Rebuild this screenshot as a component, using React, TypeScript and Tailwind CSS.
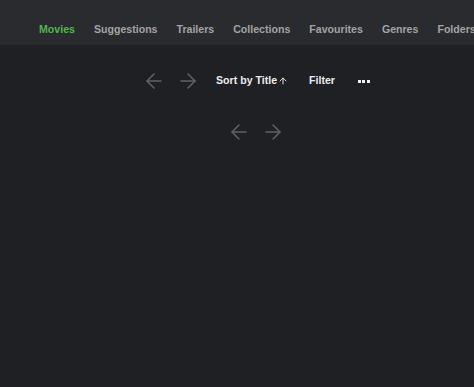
import React from "react";
import { ArrowLeft, ArrowRight, ArrowUp } from "lucide-react";

const tabs = ["Movies", "Suggestions", "Trailers", "Collections", "Favourites", "Genres", "Folders"];

function Dots() {
  return (
    <span className="flex items-center gap-[1.5px]">
      <span className="w-[3px] h-[3px] bg-[#f0f0f0]" />
      <span className="w-[3px] h-[3px] bg-[#f0f0f0]" />
      <span className="w-[3px] h-[3px] bg-[#f0f0f0]" />
    </span>
  );
}

function Pager() {
  return (
    <div className="flex items-center">
      <ArrowLeft size={24} strokeWidth={1.5} className="text-[#616266]" />
      <ArrowRight size={24} strokeWidth={1.5} className="text-[#616266] ml-[10px]" />
    </div>
  );
}

export default function App() {
  return (
    <div
      className="w-[474px] h-[387px] overflow-hidden bg-[#1f2023] text-[#e8e8e8]"
      style={{ fontFamily: '"Liberation Sans", Arial, sans-serif' }}
    >
      {/* Tabs */}
      <div className="h-[45px] bg-[#2a2b2f] flex items-end pb-[10px] pl-[39px] gap-x-[19px] whitespace-nowrap">
        {tabs.map((tab, i) => (
          <span
            key={tab}
            className={`text-[10.6px] font-bold leading-[12px] ${
              i === 0 ? "text-[#52b54b]" : "text-[#a3a3a3]"
            }`}
          >
            {tab}
          </span>
        ))}
      </div>

      {/* Toolbar */}
      <div className="flex justify-center pl-[38px] mt-[24px] h-[24px] items-center">
        <div className="flex items-center">
          <Pager />
          <span className="ml-[16px] flex items-center text-[10.6px] font-bold text-[#ececec]">
            Sort by Title
            <ArrowUp size={10} strokeWidth={2.2} className="ml-[1px]" />
          </span>
          <span className="ml-[21px] text-[10.6px] font-bold text-[#ececec]">Filter</span>
          <span className="ml-[23px]">
            <Dots />
          </span>
        </div>
      </div>

      {/* Pager */}
      <div className="flex justify-center pl-[38px] mt-[27px] h-[24px] items-center">
        <Pager />
      </div>
    </div>
  );
}
